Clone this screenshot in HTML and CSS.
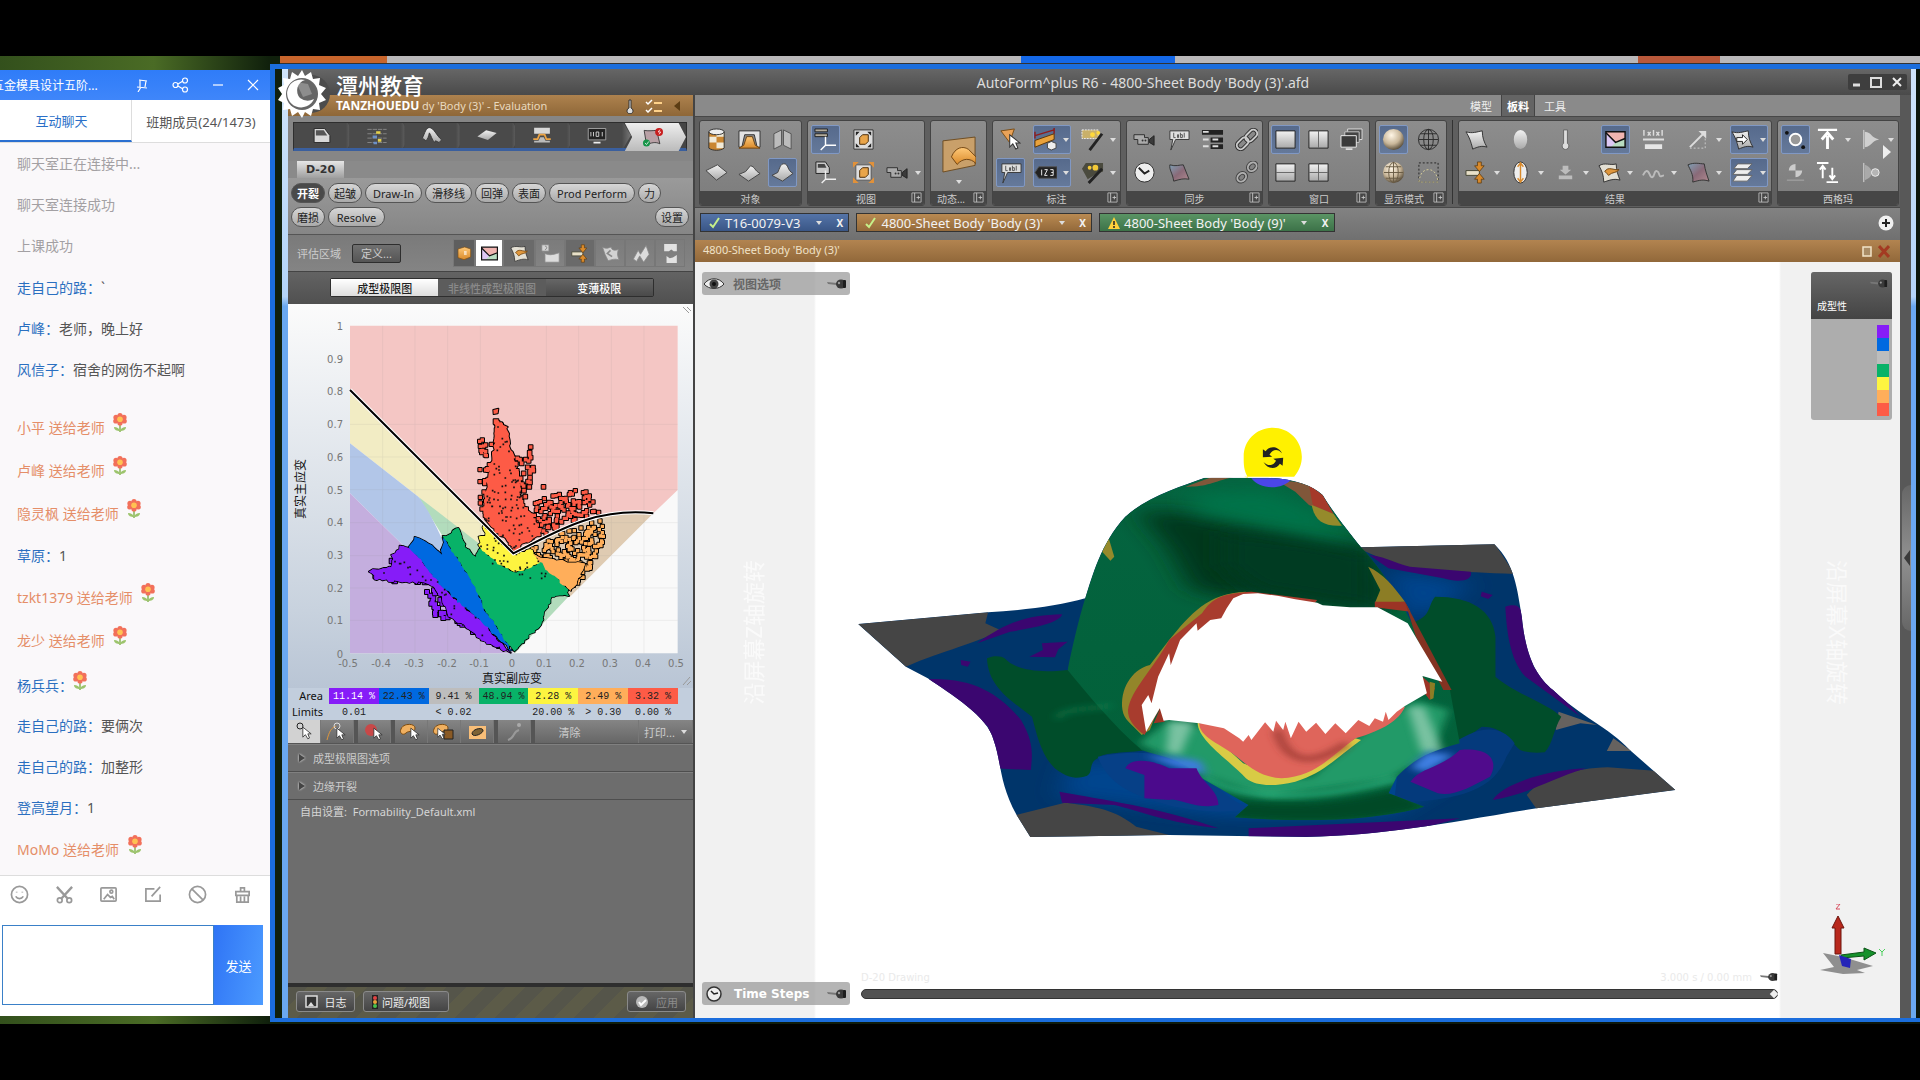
FILE: index.html
```html
<!DOCTYPE html>
<html lang="zh-CN">
<head>
<meta charset="utf-8">
<title>AutoForm^plus R6</title>
<link rel="stylesheet" href="styles.css">
</head>
<body>
<svg class="defs" aria-hidden="true">
  <defs>
    <linearGradient id="metal" x1="0" y1="0" x2="0" y2="1"><stop offset="0" stop-color="#f2f2f2"/><stop offset="1" stop-color="#a9a9a9"/></linearGradient>
    <linearGradient id="amber" x1="0" y1="0" x2="0" y2="1"><stop offset="0" stop-color="#ffc978"/><stop offset="1" stop-color="#d98a2b"/></linearGradient>
    <linearGradient id="rainbow" x1="0" y1="0" x2="1" y2="1"><stop offset="0" stop-color="#7f9fb4"/><stop offset="0.5" stop-color="#8a6a78"/><stop offset="1" stop-color="#b08a90"/></linearGradient>
    <radialGradient id="ball" cx="0.4" cy="0.3" r="0.7"><stop offset="0" stop-color="#fff6e6"/><stop offset="0.6" stop-color="#c9b79a"/><stop offset="1" stop-color="#5e523f"/></radialGradient>
  </defs>
  <symbol id="flower" viewBox="0 0 14 20"><path d="M7 10v9" stroke="#8fb85e" stroke-width="1.6"/><path d="M7 18C4 18 1 17 1 14c3 0 5 1 6 4zM7 18c3 0 6-1 6-4-3 0-5 1-6 4z" fill="#9cc46c"/><g fill="#f2705a"><circle cx="7" cy="2.6" r="2.6"/><circle cx="3" cy="4.4" r="2.6"/><circle cx="11" cy="4.4" r="2.6"/><circle cx="2.8" cy="8" r="2.6"/><circle cx="11.200" cy="8" r="2.6"/><circle cx="7" cy="10" r="2.6"/></g><circle cx="7" cy="6.300" r="2.800" fill="#ffc252"/></symbol>
  <symbol id="pin" viewBox="0 0 20 10"><path d="M0 3l10 1v2L1 5z" fill="#777"/><ellipse cx="14" cy="5" rx="5" ry="4.500" fill="#3a3a3a"/><rect x="16" y="1" width="3" height="8" rx="1" fill="#1e1e1e"/><circle cx="12" cy="4" r="1.200" fill="#999"/></symbol>
  <symbol id="dock" viewBox="0 0 12 12"><path d="M1 1h10v10H1z" fill="none" stroke="#b5b5b5"/><path d="M4 1v10M6 6h4M8 4v4" stroke="#c5c5c5"/></symbol>
  <symbol id="curved" viewBox="0 0 24 24"><path d="M1 4c7 2 11 0 17-1 0 7 2 12 5 17-6-2-10 0-15 2C6 13 4 9 1 4z" fill="url(#metal)" stroke="#333"/></symbol>
  <symbol id="camera" viewBox="0 0 24 24"><path d="M1 7h11v3h4v7H5v-5H1z" fill="#aaa" stroke="#2e2e2e"/><path d="M17 12l5-4v10l-5-3z" fill="#3a3a3a" stroke="#222"/><circle cx="10" cy="13" r="1" fill="#333"/><circle cx="13" cy="13" r="1" fill="#333"/></symbol>
  <symbol id="limitplot" viewBox="0 0 24 24"><path d="M2 4h20v16H2z" fill="#ddc8f4"/><path d="M2 4h20v8l-10 3z" fill="#f0b4b0"/><path d="M12 15l10-4v9H7z" fill="#b8dcc0"/><path d="M2 5l10 10 10-4" fill="none" stroke="#111" stroke-width="1.500"/><path d="M2 4h20v16H2z" fill="none" stroke="#111" stroke-width="1.500"/></symbol>
  <symbol id="thickness" viewBox="0 0 24 24"><path d="M1 10h14v5H1z" fill="#e8e0c8" stroke="#443"/><path d="M13 1h4v4h3l-5 6-5-6h3zM13 23h4v-4h3l-5-6-5 6h3z" fill="#d98a2b" stroke="#5c3a10" stroke-width="0.800"/></symbol>
  <symbol id="wave" viewBox="0 0 24 24"><path d="M1 5c6-4 12 0 18-2 0 7 2 12 4 17-6-2-11 0-17 2C6 15 4 10 1 5z" fill="#e4e0d4" stroke="#333"/><path d="M7 11c4-6 9-1 15-2-3 4-7 2-11 6-2-2-2-3-4-4z" fill="#e0973c" stroke="#6e4311"/></symbol>
  <symbol id="label" viewBox="0 0 24 24"><path d="M3 3h20v9H9L4 23l2-11H3z" fill="#dedede" stroke="#3a3a3a"/><path d="M7 5v5h2M11 7h1v3h-1zM14 5v5h2V7h-2M18 5v5" fill="none" stroke="#555"/></symbol>
  <symbol id="cursor" viewBox="0 0 12 16"><path d="M1 1v12l3-3 3 5 2-1-2-5h4z" fill="#fff" stroke="#333"/></symbol>
</svg>

<div class="screen">
 <div class="desktop">
  <aside class="chat">
    <header class="chat-head">
      <span class="chat-title">五金模具设计五阶...</span>
      <button aria-label="置顶"><svg width="14" height="14" viewBox="0 0 14 14"><path d="M4 2l8 1M5 2v7M11 3l-1 6M2 9l10 1M6 9l-3 5" class="ln"/></svg></button>
      <button aria-label="分享"><svg width="17" height="16" viewBox="0 0 17 16"><path d="M6 7l5-3M6 9l5 3" class="ln"/><circle cx="3.500" cy="8" r="2.500" class="ln"/><circle cx="13" cy="3.500" r="2.500" class="ln"/><circle cx="13" cy="12.500" r="2.500" class="ln"/></svg></button>
      <button aria-label="最小化"><svg width="12" height="12" viewBox="0 0 12 12"><path d="M1 6h10" class="ln"/></svg></button>
      <button aria-label="关闭"><svg width="12" height="12" viewBox="0 0 12 12"><path d="M1 1l10 10M11 1L1 11" class="ln"/></svg></button>
    </header>
    <nav class="chat-tabs"><button class="on">互动聊天</button><button>班期成员(24/1473)</button></nav>
    <ul class="messages">
      <li class="sys">聊天室正在连接中...</li>
      <li class="sys">聊天室连接成功</li>
      <li class="sys">上课成功</li>
      <li><b>走自己的路<i>：</i></b>`</li>
      <li><b>卢峰<i>：</i></b>老师，晚上好</li>
      <li><b>风信子<i>：</i></b>宿舍的网伤不起啊</li>
      <li class="gift first">小平 送给老师 <svg><use href="#flower"/></svg></li>
      <li class="gift">卢峰 送给老师 <svg><use href="#flower"/></svg></li>
      <li class="gift">隐灵枫 送给老师 <svg><use href="#flower"/></svg></li>
      <li><b>草原<i>：</i></b>1</li>
      <li class="gift">tzkt1379 送给老师 <svg><use href="#flower"/></svg></li>
      <li class="gift">龙少 送给老师 <svg><use href="#flower"/></svg></li>
      <li class="flow"><b>杨兵兵<i>：</i></b><svg><use href="#flower"/></svg></li>
      <li><b>走自己的路<i>：</i></b>要俩次</li>
      <li><b>走自己的路<i>：</i></b>加整形</li>
      <li><b>登高望月<i>：</i></b>1</li>
      <li class="gift">MoMo 送给老师 <svg><use href="#flower"/></svg></li>
    </ul>
    <div class="chat-tools">
      <button aria-label="表情"><svg viewBox="0 0 20 20"><circle cx="10" cy="10" r="8.500"/><path d="M6 12c2 3 6 3 8 0M7 7v1M13 7v1"/></svg></button>
      <button aria-label="截图"><svg viewBox="0 0 20 20"><path d="M2 2l11 12M18 2L7 14" stroke-width="2.500"/><circle cx="5" cy="16" r="2.500"/><circle cx="15" cy="16" r="2.500"/></svg></button>
      <button aria-label="图片"><svg viewBox="0 0 20 20"><rect x="2" y="3" width="16" height="14" rx="1"/><path d="M5 15l4-5 3 3 2-1 2 3"/><circle cx="13" cy="7" r="1.500"/></svg></button>
      <button aria-label="编辑"><svg viewBox="0 0 20 20"><path d="M11 4H2v13h15v-7M8 12l9-10"/></svg></button>
      <button aria-label="禁言"><svg viewBox="0 0 20 20"><circle cx="10" cy="10" r="8.500"/><path d="M4 4l12 12"/></svg></button>
      <button aria-label="清屏"><svg viewBox="0 0 20 20"><path d="M3 7h14v4H3zM4 11v7h12v-7M8 12v6M12 12v6M8 7V3h4v4"/></svg></button>
    </div>
    <form class="compose"><textarea aria-label="消息"></textarea><button type="button">发送</button></form>
  </aside>

  <div class="stage">
   <div class="behind"><i class="o1"></i><i class="b1"></i><i class="o2"></i></div>
   <div class="share">
    <div class="aero">
    <main class="app">
      <header class="titlebar">
        <h1>AutoForm^plus R6 - 4800-Sheet Body 'Body (3)'.afd</h1>
        <div class="winbtns"><button aria-label="最小化"><svg width="9" height="12" viewBox="0 0 9 12"><path d="M1 9h7" stroke="#ddd" stroke-width="3"/></svg></button><button aria-label="最大化"><svg width="12" height="12" viewBox="0 0 12 12"><path d="M1 2h10v9H1z" fill="none" stroke="#ddd" stroke-width="2"/></svg></button><button aria-label="关闭"><svg width="12" height="12" viewBox="0 0 12 12"><path d="M2 2l8 8M10 2l-8 8" stroke="#eee" stroke-width="2"/></svg></button></div>
        <div class="watermark">
          <svg width="54" height="50" viewBox="0 0 54 50"><circle cx="34" cy="25" r="19" fill="#4c4c4c"/><path d="M25 1l3 6 6-4 2 7 7-1-1 7 7 3-5 6 5 6-7 3 1 7-7-1-2 7-6-4-3 6-4-6-6 4-2-7-7 1 1-7-6-3 4-6-4-6 6-3-1-7 7 1 2-7 6 4z" fill="#fff"/><circle cx="25" cy="25" r="16" fill="#666"/><path d="M19 13l12 2 4 10-9 3z" fill="#8d8d8d"/><path d="M28 11a14 14 0 1 0 9 19 13 13 0 0 1-14-1 11 11 0 0 1 5-18z" fill="#fff"/></svg>
          <div><strong>潭州教育</strong><em>TANZHOUEDU</em></div>
        </div>
      </header>
      <div class="cols">
      <section class="panel">
        <div class="panel-title"><span>dy 'Body (3)' - Evaluation</span>
          <button aria-label="温度"><svg width="10" height="16" viewBox="0 0 10 16"><path d="M4 2h2v8a3 3 0 1 1-2 0z" fill="#ddd" stroke="#333"/></svg></button>
          <button aria-label="清单"><svg width="18" height="14" viewBox="0 0 18 14"><path d="M1 3l2 2 4-4M1 11l2 2 4-4" fill="none" stroke="#fff" stroke-width="1.500"/><path d="M9 4h8M9 12h8" stroke="#ffd28a" stroke-width="2"/></svg></button>
          <button aria-label="收起"><svg width="8" height="12" viewBox="0 0 8 12"><path d="M7 1v10L1 6z" fill="#5c3d14"/></svg></button></div>
        <div class="steps">
          <button aria-label="零件"><svg viewBox="0 0 24 24"><path d="M3 4h12l6 8v8H3z" fill="#d8d8d8" stroke="#222"/><path d="M5 6h9l4 6H5z" fill="#555"/></svg></button>
          <button aria-label="计划"><svg viewBox="0 0 24 24"><path d="M1 5h22M1 10h22M1 15h22M1 20h22" stroke="#8c8c8c" stroke-dasharray="5 1"/><path d="M11 7h5v3h-5zM13 16h4v3h-4z" fill="#e6d24a"/><path d="M7 12h5v3H7zM8 19h4v3H8z" fill="#6b90c8"/></svg></button>
          <button aria-label="曲面"><svg viewBox="0 0 24 24"><path d="M1 15C4 9 5 3 9 3c5 0 8 9 14 14l-3 3-4-2-1 2c-3-3-4-8-6-11-1 4-2 8-4 9z" fill="url(#metal)" stroke="#333"/></svg></button>
          <button aria-label="板料"><svg viewBox="0 0 24 24"><path d="M1 13l10-7 12 3-10 8z" fill="url(#metal)"/></svg></button>
          <button aria-label="工具"><svg viewBox="0 0 24 24"><path d="M3 3h18v7H3z" fill="#d8d8d8"/><path d="M2 16h5l2-5h6l2 5h5" fill="none" stroke="#eda444" stroke-width="2"/><path d="M3 18h5l2-4h4l2 4h5v2H3z" fill="#bbb"/></svg></button>
          <button aria-label="计算"><svg viewBox="0 0 24 24"><path d="M2 4h20v13H2z" fill="#222" stroke="#aaa"/><path d="M5 8v5M8 8v5M11 8h3v5h-3zM18 8v5" fill="none" stroke="#ddd"/><path d="M8 20h8" stroke="#eee" stroke-width="2"/></svg></button>
          <button class="cur" aria-label="评估"><svg viewBox="0 0 28 24"><path d="M4 3c7 1 11 0 16 0l4 17c-6-3-11-1-17 1z" fill="#b9a1a6" stroke="#222"/><circle cx="23" cy="5" r="5" fill="#c81e1e"/><path d="M24 2l-2 3h3l-2 3" stroke="#fff" fill="none"/><circle cx="7" cy="19" r="4.500" fill="#159447"/><path d="M5 19l2 2 3-4" fill="none" stroke="#fff"/></svg></button>
        </div>
        <div class="optabs"><button>D-20</button></div>
        <div class="pills">
          <button class="on">开裂</button><button>起皱</button><button class="w57">Draw-In</button><button class="w47">滑移线</button><button>回弹</button><button>表面</button><button class="w86">Prod Perform</button><button class="w23">力</button>
          <button>磨损</button><button class="w57">Resolve</button><button class="end">设置</button>
        </div>
        <div class="evalrow"><label for="area">评估区域</label><button id="area" class="define">定义...</button>
          <div class="evalicons">
            <button aria-label="箱" class="c1"><svg viewBox="0 0 24 24"><path d="M3 6l10-3 9 3v12l-10 4-9-3z" fill="url(#amber)" stroke="#7a4b12"/><path d="M12 9h4v6h-4z" fill="#fff" opacity=".6"/></svg></button>
            <button aria-label="极限图" class="c2"><svg viewBox="0 0 24 24"><use href="#limitplot"/></svg></button>
            <button aria-label="起皱" class="c3"><svg viewBox="0 0 24 24"><use href="#wave"/></svg></button>
            <button aria-label="曲线"><svg viewBox="0 0 24 24"><path d="M1 1h9v8H1z" fill="#d5d5d5" stroke="#888"/><path d="M2 10c7 5 12 4 21 1v12H5V12z" fill="#dcdcdc" stroke="#888"/><path d="M5 3c3-1 3 4 0 4" fill="none" stroke="#777"/></svg></button>
            <button aria-label="厚度" class="c5"><svg viewBox="0 0 24 24"><use href="#thickness"/></svg></button>
            <button aria-label="回弹"><svg viewBox="0 0 24 24"><path d="M2 4c6 3 8 0 11 0 0 3 3 5 9 3-2 5-1 9 1 13-6-2-9 0-14 1l-4-8z" fill="#d2d2d2" stroke="#888"/><path d="M12 8l-4 4 6 4" fill="none" stroke="#888" stroke-width="2"/></svg></button>
            <button aria-label="表面"><svg viewBox="0 0 24 24"><path d="M3 19L9 8l3 5 7-11 4 11-7 10-5-8-4 7z" fill="#dcdcdc" stroke="#888"/></svg></button>
            <button aria-label="更多"><svg viewBox="0 0 24 24"><path d="M4 0h16v9h-4l-3-2-3 2H4zM7 15l4 3 4-1 5-3v10H7z" fill="#e2e2e2"/></svg></button>
          </div></div>
        <div class="segwrap"><div class="seg"><button class="on">成型极限图</button><button class="off">非线性成型极限图</button><button>变薄极限</button></div></div>
        <div class="chart">
          <svg viewBox="0 0 405 384" role="img" aria-label="成型极限图">
            <g transform="scale(.33333) translate(-9 -12)">
              <path d="M195 77h983v983H195z" fill="#f9f9f9"/>
              <path d="M195 77h983v493l-73 70C920 620 800 705 685 760L195 270z" fill="#f4c6c4"/>
              <path d="M195 270l490 490v70L400 590 195 430z" fill="#f2ecc4"/>
              <path d="M400 590l285 220 80 70 90 5-165 175z" fill="#b2dcbc"/>
              <path d="M195 430l205 160c70 90 60 160 285 470L195 580z" fill="#b2c6e8"/>
              <path d="M195 580l490 480H195z" fill="#c4aede"/>
              <path d="M685 760c115-55 235-140 420-120L855 890 740 770z" fill="#dfcbb2"/>
              <path d="M293 77v983M390 77v983M488 77v983M586 77v983M784 77v983M881 77v983M979 77v983M1077 77v983M195 961h983M195 864h983M195 767h983M195 668h983M195 569h983M195 471h983M195 373h983" stroke="#888" stroke-width="2" opacity=".16"/>
              <g id="cloud"></g>
              <path d="M195 270l490 490c115-55 235-140 420-120" fill="none" stroke="#fff" stroke-width="12"/>
              <path d="M195 270l490 490c115-55 235-140 420-120" fill="none" stroke="#000" stroke-width="6"/>
            </g>
            <g class="ytick"><text x="55" y="26">1</text><text x="55" y="59">0.9</text><text x="55" y="91">0.8</text><text x="55" y="124">0.7</text><text x="55" y="157">0.6</text><text x="55" y="190">0.5</text><text x="55" y="222">0.4</text><text x="55" y="255">0.3</text><text x="55" y="288">0.2</text><text x="55" y="320">0.1</text><text x="55" y="354">0</text></g>
            <g class="xtick"><text x="60" y="363">-0.5</text><text x="93" y="363">-0.4</text><text x="126" y="363">-0.3</text><text x="159" y="363">-0.2</text><text x="191" y="363">-0.1</text><text x="224" y="363">0</text><text x="256" y="363">0.1</text><text x="289" y="363">0.2</text><text x="322" y="363">0.3</text><text x="355" y="363">0.4</text><text x="388" y="363">0.5</text></g>
            <text class="axis" x="224" y="379">真实副应变</text>
            <text class="axis" transform="translate(17 185) rotate(-90)">真实主应变</text>
            <path d="M395 3l6 6M399 3l4 4M395 381l7-8M399 381l4-4" stroke="#999"/>
          </svg>
        </div>
        <div class="areas"><table>
          <tr><th>Area</th><td class="k1">11.14 %</td><td class="k2">22.43 %</td><td class="k3">9.41 %</td><td class="k4">48.94 %</td><td class="k5">2.28 %</td><td class="k6">2.49 %</td><td class="k7">3.32 %</td></tr>
          <tr><th>Limits</th><td>0.01</td><td></td><td>&lt; 0.02</td><td></td><td>20.00 %</td><td>&gt; 0.30</td><td>0.00 %</td></tr>
        </table></div>
        <div class="picker">
          <button class="p1" aria-label="选点"><svg viewBox="0 0 24 20"><circle cx="8" cy="4" r="3" fill="none" stroke="#222"/><use href="#cursor" x="10" y="4" width="10" height="14"/></svg></button>
          <button aria-label="选线"><svg viewBox="0 0 24 20"><path d="M2 18C4 10 6 6 11 4" fill="none" stroke="#e0973c"/><circle cx="12" cy="4" r="3" fill="none" stroke="#ddd"/><use href="#cursor" x="11" y="5" width="10" height="14"/></svg></button>
          <button class="gap" aria-label="选圆"><svg viewBox="0 0 24 20"><circle cx="9" cy="8" r="6" fill="#c84848"/><use href="#cursor" x="11" y="5" width="10" height="14"/></svg></button>
          <button class="gap" aria-label="选区"><svg viewBox="0 0 24 20"><path d="M2 7c2-6 14-6 14-1s-6 2-9 5-7 0-5-4z" fill="#f0b060" stroke="#7a4b12"/><use href="#cursor" x="11" y="5" width="10" height="14"/></svg></button>
          <button aria-label="选体"><svg viewBox="0 0 24 20"><path d="M2 7c2-6 14-6 14-1s-6 2-9 5-7 0-5-4z" fill="#f0b060" stroke="#7a4b12"/><path d="M12 8h9v9h-9z" fill="#8a5a25" stroke="#222"/><use href="#cursor" x="5" y="5" width="9" height="13"/></svg></button>
          <button aria-label="孔"><svg viewBox="0 0 24 20"><path d="M4 4h17v13H4z" fill="#f8be78"/><path d="M7 12c0-5 10-7 11-4s-9 8-11 4z" fill="#7d6235" stroke="#222"/></svg></button>
          <button class="gap" aria-label="路径"><svg viewBox="0 0 24 20"><path d="M6 18c8-3 4-8 11-10" fill="none" stroke="#999" stroke-width="2"/><circle cx="17" cy="3" r="2" fill="#aaa"/></svg></button>
          <button class="gap clear">清除</button><button class="print">打印... <i class="caret"></i></button>
        </div>
        <details class="fold"><summary>成型极限图选项</summary></details>
        <details class="fold"><summary>边缘开裂</summary></details>
        <p class="free">自由设置:&nbsp; Formability_Default.xml</p>
        <footer class="panel-foot">
          <button><svg width="13" height="13" viewBox="0 0 13 13"><path d="M1 1h11v11H1z" fill="#333" stroke="#ddd" stroke-width="1.500"/><path d="M3 11l3-4 3 4z" fill="#ddd"/></svg>日志</button>
          <button class="wide"><svg width="6" height="14" viewBox="0 0 6 14"><path d="M0 0h6v14H0z" fill="#222"/><circle cx="3" cy="3" r="2" fill="#e04444"/><circle cx="3" cy="7" r="2" fill="#e8a23a"/><circle cx="3" cy="11" r="2" fill="#48c04c"/></svg>问题/视图</button>
          <button class="apply" disabled><svg width="14" height="14" viewBox="0 0 14 14"><circle cx="7" cy="7" r="6" fill="#b8b8b8"/><path d="M4 7l2 3 5-5" fill="none" stroke="#fff" stroke-width="2"/></svg>应用</button>
        </footer>
      </section>

      <section class="work">
        <nav class="menu"><button>模型</button><button class="on">板料</button><button>工具</button></nav>
        <div class="ribbon">
          <div class="grp g1"><div class="tools">
            <button aria-label="桶"><svg viewBox="0 0 24 24"><path d="M4 4h16v17c-4 3-12 3-16 0z" fill="#c98632"/><path d="M4 9h8v6H4zM12 4h8v5h-8zM12 15h8v6h-8z" fill="#f1ead8"/><ellipse cx="12" cy="4" rx="8" ry="3" fill="#eee" stroke="#333"/><path d="M4 4v17c4 3 12 3 16 0V4" fill="none" stroke="#333"/></svg></button>
            <button aria-label="模具"><svg viewBox="0 0 24 24"><path d="M1 3h22v17h-3L17 7H7L4 20H1z" fill="#e2e2e2" stroke="#333"/><path d="M1 21l5-3 3-9h6l3 9 5 3z" fill="url(#amber)" stroke="#6e4311"/></svg></button>
            <button aria-label="截面"><svg viewBox="0 0 24 24"><path d="M3 6l8-4v16l-8 4zM13 2l8 4v16l-8-4z" fill="#bcbcbc" stroke="#555"/></svg></button>
            <button aria-label="平板"><svg viewBox="0 0 24 24"><path d="M1 10l12-6 10 8-11 8z" fill="url(#metal)" stroke="#444"/></svg></button>
            <button aria-label="曲板"><svg viewBox="0 0 24 24"><path d="M1 14l7-3 5-6c5 1 4 5 10 8l-12 8z" fill="url(#metal)" stroke="#444"/></svg></button>
            <button class="sel" aria-label="成形"><svg viewBox="0 0 24 24"><path d="M1 15l6-3c2-4 3-10 7-9 4 0 3 7 9 10l-11 8z" fill="url(#metal)" stroke="#444"/></svg></button>
          </div><div class="cap">对象</div></div>

          <div class="grp g2"><div class="tools">
            <button class="sel" aria-label="坐标"><svg viewBox="0 0 24 24"><path d="M1 1h13v3H1zM1 6h13v3H1z" fill="#b5ad9c" stroke="#222"/><path d="M12 9v9h11M12 18l-5 5" fill="none" stroke="#fff" stroke-width="1.500"/></svg></button>
            <button aria-label="适合"><svg viewBox="0 0 24 24"><path d="M2 2h20v20H2z" fill="#ddd" stroke="#333"/><path d="M4 4h4L4 8zM20 4v4l-4-4zM4 20v-4l4 4zM20 20h-4l4-4z" fill="#222"/><path d="M8 10l3-3h6v7l-3 3H8z" fill="#e9a54a" stroke="#4a2c08"/></svg></button><span></span>
            <button aria-label="车身"><svg viewBox="0 0 24 24"><path d="M2 1h10l4 6v6H2z" fill="#c8c8c8" stroke="#222"/><path d="M4 3h7l2 4H4z" fill="#444"/><path d="M12 10v9h11M12 19l-4 4" fill="none" stroke="#eee" stroke-width="1.500"/></svg></button>
            <button aria-label="框选"><svg viewBox="0 0 24 24"><path d="M4 4h16v16H4z" fill="#ddd" stroke="#555"/><path d="M1 1h6L1 7zM23 1v6l-6-6zM1 23v-6l6 6zM23 23h-6l6-6z" fill="#e0913a"/><path d="M8 10l3-3h6v7l-3 3H8z" fill="#e9a54a" stroke="#4a2c08"/></svg></button>
            <button class="dd" aria-label="录像"><svg viewBox="0 0 24 24"><use href="#camera"/></svg><i class="caret"></i></button>
          </div><div class="cap">视图<svg><use href="#dock"/></svg></div></div>

          <div class="grp g3"><div class="tools"><button class="big" aria-label="动态截面"><svg width="36" height="40" viewBox="0 0 36 40"><path d="M1 5l34-4v30L1 38z" fill="#c9a06a" stroke="#6b4a20"/><path d="M10 22c4-10 12-12 18-8l8 8v7c-6-6-14-6-20 1z" fill="url(#amber)" stroke="#6e4311"/></svg><i class="caret"></i></button></div><div class="cap">动态...<svg><use href="#dock"/></svg></div></div>

          <div class="grp g4"><div class="tools">
            <button aria-label="选择"><svg viewBox="0 0 24 24"><path d="M2 3l14-2-5 14z" fill="#e9a258" stroke="#7a4b12"/><use href="#cursor" x="10" y="6" width="13" height="17"/></svg></button>
            <button class="dd sel" aria-label="测量"><svg viewBox="0 0 24 24"><path d="M1 13l20-7v6L1 20z" fill="#e9a23c" stroke="#5a3508"/><path d="M1 8l20-6M1 4v7M21 0v6" stroke="#8e1c1c" stroke-width="1.500"/><path d="M14 16l4-2 5 2v5l-5 2-4-2z" fill="#eee" stroke="#444"/></svg><i class="caret"></i></button>
            <button class="dd" aria-label="魔棒"><svg viewBox="0 0 24 24"><path d="M1 2h17v9H1z" fill="#c9b06a" stroke="#eee" stroke-dasharray="2 1"/><path d="M9 23L22 6" stroke="#222" stroke-width="3"/><circle cx="12" cy="7" r="2.500" fill="#ffd93a"/><circle cx="18" cy="5" r="2" fill="#ffd93a"/></svg><i class="caret"></i></button>
            <button class="sel" aria-label="标签"><svg viewBox="0 0 24 24"><use href="#label"/></svg></button>
            <button class="dd sel" aria-label="数值"><svg viewBox="0 0 24 24"><path d="M1 12l4-6h19v12H5z" fill="#222" stroke="#555"/><path d="M8 9v6M11 9h3l-3 6h3M17 9h3v6h-3M18 12h2" fill="none" stroke="#eee"/></svg><i class="caret"></i></button>
            <button class="dd" aria-label="魔棒标注"><svg viewBox="0 0 24 24"><path d="M1 8l4-6h18v9l-8 3-8 5z" fill="#4a4a3e"/><path d="M8 23L22 8" stroke="#222" stroke-width="3"/><circle cx="9" cy="7" r="2" fill="#f2c838"/><circle cx="15" cy="7" r="3" fill="#f2c838"/></svg><i class="caret"></i></button>
          </div><div class="cap">标注<svg><use href="#dock"/></svg></div></div>

          <div class="grp g5"><div class="tools">
            <button aria-label="同步录像"><svg viewBox="0 0 24 24"><use href="#camera"/></svg></button>
            <button aria-label="同步标签"><svg viewBox="0 0 24 24"><use href="#label"/></svg></button>
            <button aria-label="同步选项"><svg viewBox="0 0 24 24"><path d="M1 2h22v5H1zM10 10h13v5H10zM10 17h13v5H10z" fill="#222"/><path d="M2 4h6M2 12h6M2 19h6M12 12h6M12 19h6" stroke="#ddd" stroke-width="2"/></svg></button>
            <button aria-label="链接"><svg viewBox="0 0 24 24"><g fill="none" stroke="#333" stroke-width="4"><rect x="10" y="4" width="14" height="8" rx="4" transform="rotate(-45 17 8)"/><rect x="1" y="12" width="14" height="8" rx="4" transform="rotate(-45 8 16)"/></g><g fill="none" stroke="#ccc" stroke-width="2"><rect x="10" y="4" width="14" height="8" rx="4" transform="rotate(-45 17 8)"/><rect x="1" y="12" width="14" height="8" rx="4" transform="rotate(-45 8 16)"/></g></svg></button>
            <button aria-label="时间"><svg viewBox="0 0 24 24"><circle cx="12" cy="12" r="10" fill="#eee" stroke="#333"/><path d="M6 7l6 6 5-3" fill="none" stroke="#222" stroke-width="2"/></svg></button>
            <button aria-label="颜色"><svg viewBox="0 0 24 24"><path d="M3 4c6 2 10 0 14 0l6 15c-6-1-9 0-16 2C6 13 2 9 3 4z" fill="url(#rainbow)" stroke="#333"/></svg></button><span></span>
            <button aria-label="断开"><svg viewBox="0 0 24 24"><g fill="none" stroke="#444" stroke-width="4"><ellipse cx="18" cy="6" rx="5" ry="4" transform="rotate(-45 18 6)"/><ellipse cx="7" cy="17" rx="5" ry="4" transform="rotate(-45 7 17)"/></g><g fill="none" stroke="#b0b0b0" stroke-width="2"><ellipse cx="18" cy="6" rx="5" ry="4" transform="rotate(-45 18 6)"/><ellipse cx="7" cy="17" rx="5" ry="4" transform="rotate(-45 7 17)"/></g></svg></button>
          </div><div class="cap">同步<svg><use href="#dock"/></svg></div></div>

          <div class="grp g6"><div class="tools">
            <button class="sel" aria-label="单窗口"><svg viewBox="0 0 24 24"><path d="M2 3h20v18H2z" fill="url(#metal)" stroke="#222"/></svg></button>
            <button aria-label="左右"><svg viewBox="0 0 24 24"><path d="M2 3h20v18H2z" fill="url(#metal)" stroke="#222"/><path d="M12 3v18" stroke="#666"/></svg></button>
            <button aria-label="多显示器"><svg viewBox="0 0 24 24"><path d="M8 1h15v11H8z" fill="#555" stroke="#ddd"/><path d="M5 4h15v11H5z" fill="#444" stroke="#ccc"/><path d="M1 8h16v12H1z" fill="#3a3a3a" stroke="#eee"/><path d="M6 22h7" stroke="#ddd" stroke-width="2"/></svg></button>
            <button aria-label="上下"><svg viewBox="0 0 24 24"><path d="M2 3h20v18H2z" fill="url(#metal)" stroke="#222"/><path d="M2 12h20" stroke="#666"/></svg></button>
            <button aria-label="四分"><svg viewBox="0 0 24 24"><path d="M2 3h20v18H2z" fill="url(#metal)" stroke="#222"/><path d="M2 12h20M12 3v18" stroke="#666"/></svg></button>
          </div><div class="cap">窗口<svg><use href="#dock"/></svg></div></div>

          <div class="grp g7"><div class="tools">
            <button class="sel" aria-label="实体"><svg viewBox="0 0 24 24"><circle cx="12" cy="12" r="11" fill="url(#ball)"/></svg></button>
            <button aria-label="线框"><svg viewBox="0 0 24 24"><g fill="none" stroke="#2c2c2c"><circle cx="12" cy="12" r="10.500"/><ellipse cx="12" cy="12" rx="5" ry="10.500"/><path d="M12 1v22M2 12h20M4 6h16M4 18h16"/></g></svg></button>
            <button aria-label="实体网格"><svg viewBox="0 0 24 24"><circle cx="12" cy="12" r="11" fill="url(#ball)"/><g fill="none" stroke="#6a5c45"><ellipse cx="12" cy="12" rx="5" ry="10.500"/><path d="M12 1v22M2 12h20M4 6h16M4 18h16"/></g></svg></button>
            <button aria-label="轮廓"><svg viewBox="0 0 24 24"><path d="M2 2h20v20H2z" fill="none" stroke="#222" stroke-dasharray="2 2"/><path d="M2 22c1-8 4-13 10-13s9 5 10 13z" fill="none" stroke="#d8cf9a" stroke-dasharray="2 2"/></svg></button>
          </div><div class="cap">显示模式<svg><use href="#dock"/></svg></div></div>
          <i class="rsep"></i>

          <div class="grp g8"><div class="tools">
            <button class="dd" aria-label="曲面"><svg viewBox="0 0 24 24"><use href="#curved"/></svg><i></i></button>
            <button class="dd" aria-label="椭圆"><svg viewBox="0 0 24 24"><ellipse cx="12" cy="12" rx="7" ry="10" fill="url(#metal)"/></svg><i></i></button>
            <button class="dd" aria-label="温度"><svg viewBox="0 0 24 24"><path d="M10 2h4v14a3.500 3.500 0 1 1-4 0z" fill="#ddd" stroke="#666"/></svg><i></i></button>
            <button class="sel" aria-label="成型性"><svg viewBox="0 0 24 24"><use href="#limitplot"/></svg></button>
            <button class="dd" aria-label="公式"><svg viewBox="0 0 24 24"><path d="M2 2v6M6 4l3 4M9 4L6 8M12 2v6M15 4l3 4M18 4l-3 4M21 2v6" stroke="#ddd" stroke-width="1.500"/><path d="M1 12h22" stroke="#ddd" stroke-width="2"/><path d="M3 17h18v5H3z" fill="#e6e6e6"/></svg><i></i></button>
            <button class="dd" aria-label="方向"><svg viewBox="0 0 24 24"><path d="M3 20L17 6" stroke="#ddd" stroke-width="2"/><path d="M12 3h8v8z" fill="#ddd"/><path d="M3 21h16V9" fill="none" stroke="#ccc" stroke-dasharray="2 2"/></svg><i class="caret"></i></button>
            <button class="dd sel" aria-label="流向"><svg viewBox="0 0 24 24"><use href="#curved"/><path d="M6 10h6V7l5 5-5 5v-3H6z" fill="#fff" stroke="#222"/></svg><i class="caret"></i></button>
            <button class="dd" aria-label="减薄"><svg viewBox="0 0 24 24"><use href="#thickness"/></svg><i class="caret"></i></button>
            <button class="dd" aria-label="应变"><svg viewBox="0 0 24 24"><ellipse cx="12" cy="12" rx="7" ry="11" fill="#eee" stroke="#333"/><path d="M12 3v18M9 6l3-4 3 4M9 18l3 4 3-4" fill="none" stroke="#d98a2b" stroke-width="1.500"/></svg><i class="caret"></i></button>
            <button class="dd" aria-label="压力"><svg viewBox="0 0 24 24"><path d="M9 5h6v4h3l-6 5-6-5h3zM5 15h14v4H5z" fill="#bdbdbd"/></svg><i class="caret"></i></button>
            <button class="dd" aria-label="起皱"><svg viewBox="0 0 24 24"><use href="#wave"/></svg><i class="caret"></i></button>
            <button class="dd" aria-label="回弹"><svg viewBox="0 0 24 24"><path d="M1 15c3-6 5-6 7-1s4 3 5-1 4-3 5 1 3 1 5 1" fill="none" stroke="#bbb" stroke-width="2"/></svg><i class="caret"></i></button>
            <button class="dd" aria-label="云图"><svg viewBox="0 0 24 24"><path d="M1 4c7-3 12-1 17-1 1 7 3 12 5 18-6-2-10-1-17 1C7 14 3 9 1 4z" fill="url(#rainbow)" stroke="#333"/></svg><i class="caret"></i></button>
            <button class="dd sel" aria-label="图层"><svg viewBox="0 0 24 24"><path d="M2 21l4-6h16l-5 6zM2 14l4-5h16l-5 5zM3 8l4-5h15l-5 5z" fill="#eee" stroke="#666"/></svg><i class="caret"></i></button>
          </div><div class="cap">结果<svg><use href="#dock"/></svg></div></div>

          <div class="grp g9"><div class="tools">
            <button class="sel" aria-label="散点"><svg viewBox="0 0 24 24"><circle cx="12" cy="12" r="6" fill="#999" stroke="#fff" stroke-width="2"/><circle cx="3" cy="5" r="2" fill="#111"/><circle cx="20" cy="20" r="2" fill="#111"/></svg></button>
            <button class="dd" aria-label="上限"><svg viewBox="0 0 24 24"><path d="M2 2h20" stroke="#fff" stroke-width="2.500"/><path d="M12 22V8M6 12l6-7 6 7" fill="none" stroke="#fff" stroke-width="3"/></svg><i class="caret"></i></button>
            <button class="dd" aria-label="分布"><svg viewBox="0 0 24 24"><path d="M5 2v20" stroke="#ddd"/><path d="M6 4c8 1 6 6 15 8-9 2-7 7-15 8z" fill="#d0d0d0"/></svg><i class="caret"></i></button>
            <button aria-label="靶"><svg viewBox="0 0 24 24"><path d="M12 3v14a7 7 0 0 0 7-7h-7zM12 3a7 7 0 0 0-7 7h7z" fill="#ccc"/><path d="M3 20h18" stroke="#aaa"/></svg></button>
            <button class="dd" aria-label="范围"><svg viewBox="0 0 24 24"><path d="M1 2h12M11 22h12" stroke="#fff" stroke-width="2"/><path d="M7 18V6M4 9l3-4 3 4M17 7v11M14 15l3 4 3-4" fill="none" stroke="#fff" stroke-width="2"/></svg><i></i></button>
            <button class="dd" aria-label="偏差"><svg viewBox="0 0 24 24"><path d="M5 2v20" stroke="#ddd"/><path d="M6 4c8 3 6 7 8 8-2 2 0 5-8 8z" fill="#aaa"/><circle cx="17" cy="12" r="4" fill="#b5b5b5" stroke="#eee"/></svg><i></i></button>
          </div><div class="cap">西格玛</div><button class="more" aria-label="更多"><svg width="8" height="14" viewBox="0 0 8 14"><path d="M0 0l8 7-8 7z" fill="#eee"/></svg></button></div>
        </div>

        <div class="docs">
          <div class="doc blue"><svg width="12" height="12" viewBox="0 0 12 12"><path d="M1 7l3 3 6-9" class="ok"/></svg><span>T16-0079-V3</span><button aria-label="菜单"><i class="caret"></i></button><button aria-label="关闭">X</button></div>
          <div class="doc brown"><svg width="12" height="12" viewBox="0 0 12 12"><path d="M1 7l3 3 6-9" class="ok"/></svg><span>4800-Sheet Body 'Body (3)'</span><button aria-label="菜单"><i class="caret"></i></button><button aria-label="关闭">X</button></div>
          <div class="doc green"><svg width="12" height="12" viewBox="0 0 12 12"><path d="M6 0l6 12H0z" fill="#ffd23c"/><path d="M6 4v4M6 9v2" stroke="#222" stroke-width="1.500"/></svg><span>4800-Sheet Body 'Body (9)'</span><button aria-label="菜单"><i class="caret"></i></button><button aria-label="关闭">X</button></div>
          <button class="add" aria-label="新增"><svg width="16" height="16" viewBox="0 0 16 16"><circle cx="8" cy="8" r="7.500" fill="#f0f0f0"/><path d="M8 4v8M4 8h8" stroke="#222" stroke-width="2"/></svg></button>
        </div>
        <div class="docbar"><span>4800-Sheet Body 'Body (3)'</span><svg width="10" height="12" viewBox="0 0 10 12"><path d="M1 2h8v9H1z" fill="#a98c66" stroke="#f2e3c8" stroke-width="1.500"/></svg><svg width="12" height="13" viewBox="0 0 12 13"><path d="M1 1l10 11M11 1L1 12" stroke="#a33a22" stroke-width="3"/></svg></div>

        <div class="viewport">
          <svg class="model" viewBox="0 0 1205 756" role="img" aria-label="板料成型性">
            <defs>
              <filter id="soft" x="-30%" y="-30%" width="160%" height="160%"><feGaussianBlur stdDeviation="9"/></filter>
              <filter id="softer" x="-40%" y="-40%" width="180%" height="180%"><feGaussianBlur stdDeviation="24"/></filter>
              <linearGradient id="cone" x1="0" y1="0" x2="0" y2="1"><stop offset="0" stop-color="#046440"/><stop offset="1" stop-color="#026038"/></linearGradient>
              <clipPath id="sheet"><path d="M33 642L270 607C340 600 400 587 447 565C460 500 475 400 520 320C560 260 620 230 665 203L780 203C830 208 860 225 880 255C900 310 930 370 950 412L1193 403C1230 460 1235 540 1243 620C1250 740 1270 800 1300 840C1350 920 1400 950 1440 1020L1523 1140L1270 1195C1100 1240 1000 1275 850 1281L600 1275L347 1281L322 1215C290 1120 295 1060 280 990C270 920 200 850 160 805L120 770z"/></clipPath>
              <clipPath id="conearea"><path d="M447 565C460 500 475 400 520 320C560 260 620 230 665 203L780 203C830 208 860 225 880 255C900 310 930 370 950 412C1000 500 1040 620 1055 690L1112 840L1130 1000C1060 1030 1040 1060 1015 1100L1000 1150L1065 1190C980 1230 850 1240 720 1222L745 1185L655 1100C620 1040 570 1035 550 1020C500 950 450 850 415 780C425 700 435 630 447 565z"/></clipPath>
            </defs>
            <g transform="matrix(.5485 0 0 .33333 145 148)">
              <g clip-path="url(#sheet)">
                <path d="M0 180h1568v1120H0z" fill="#00356a"/>
                <path d="M420 1060l-20 100 300 60h300l100-100 40-160zM1000 480l150 40-60 80-60 20z" fill="#00458e" filter="url(#softer)"/>
                <g fill="#454545">
                  <path d="M33 642L270 607L265 640L292 660C250 700 190 720 120 770z"/>
                  <path d="M940 412L1193 400L1230 492C1130 485 1050 480 1020 468L980 440z"/>
                  <path d="M1525 1140L1270 1197L1252 1155C1280 1100 1340 1075 1400 1072L1485 1082z"/>
                  <path d="M320 1215L410 1178C480 1190 510 1210 540 1250L600 1275L340 1285z"/>
                  <path d="M1310 905l70 40-30-5-45 20zM1410 985l-12 38h45z" fill="#66625f"/>
                </g>
                <g fill="#3b0670">
                  <path d="M155 808C240 800 290 850 330 930C355 1000 350 1040 348 1080L285 1075L270 950z"/>
                  <path d="M250 700C300 640 340 615 405 613C400 640 350 655 310 665z"/>
                  <path d="M368 700L415 695L398 718L392 742L345 740L370 720zM220 750l18 5-5 15-12-5z"/>
                  <path d="M965 435C1000 440 1020 470 1050 472L1150 485C1155 510 1130 520 1100 505L1000 475z"/>
                  <path d="M1213 590C1240 575 1245 600 1245 640L1265 770L1350 920L1250 800C1220 750 1215 650 1213 590z"/>
                  <path d="M1170 545l20 10-8 12-14-8z"/>
                  <path d="M400 1145C480 1170 580 1190 690 1255C600 1240 540 1200 500 1185L405 1178z"/>
                  <path d="M745 1255L1130 1225L1000 1280H745z"/>
                  <path d="M1190 1170C1210 1120 1290 1080 1360 1075C1290 1110 1260 1150 1190 1170z"/>
                </g>
                <g fill="#004d2a">
                  <path d="M268 745C280 735 295 738 300 745C320 780 360 790 415 780L560 1020C520 1030 480 1025 470 1045C450 1060 465 1095 445 1100C430 1105 420 1105 405 1090C370 1060 360 980 350 920C310 870 270 830 268 745z"/>
                  <path d="M1085 560C1150 560 1190 600 1195 680V800C1230 850 1290 880 1315 920C1300 960 1300 1000 1285 1027C1265 1030 1250 1027 1240 1020C1220 990 1210 950 1170 950L1120 1010L1030 780L1040 640C1080 620 1070 590 1085 560z"/>
                </g>
                <path d="M470 1040C540 1015 600 1035 655 1050C670 1110 700 1160 745 1195C700 1215 650 1200 610 1190C540 1160 490 1130 470 1040z" fill="#064087"/>
                <path d="M1015 1110C1020 1060 1060 1020 1110 1010C1150 960 1200 930 1230 1000L1215 1040C1190 1150 1120 1170 1010 1180z" fill="#043a7c"/>
                <g clip-path="url(#conearea)">
                <path d="M400 190h760v1050H400z" fill="url(#cone)"/>
                <path d="M540 300L640 310L960 415L1010 600L760 560L700 560L640 540L600 420z" fill="#00381f" filter="url(#softer)"/>
                <path d="M700 360L880 395L970 430V600L760 545L700 470z" fill="#003a20" filter="url(#softer)"/>
                <path d="M640 250L780 240L870 300L940 400L650 305z" fill="#067349" filter="url(#softer)"/>
                <path d="M545 1000L600 930L690 960L760 1110L860 1100L960 960L1050 870L1110 900L1080 1030L1000 1110L780 1160L670 1100z" fill="#219a68" filter="url(#soft)"/>
                <path d="M600 935h45l-25 100-25-10zM1035 890l30 0 35 140-40-5z" fill="#a0d4bb" opacity=".7" filter="url(#soft)"/>
                <path d="M660 1100C740 1175 860 1175 1020 1105" fill="none" stroke="#2aae7a" stroke-width="16" filter="url(#soft)"/>
                <path d="M680 1165C800 1195 900 1185 1010 1140L1065 1190C980 1235 850 1240 700 1222z" fill="#004a28" filter="url(#soft)"/>
                </g>
                <path d="M395 925C410 890 460 900 495 885" fill="none" stroke="#168050" stroke-width="8" filter="url(#soft)"/>
                <path d="M555 1035C610 1040 640 1045 658 1055L668 1095L610 1070z" fill="#3c7de0" filter="url(#soft)"/>
                <path d="M520 1075C530 1040 570 1050 600 1075H650C660 1120 690 1140 690 1185C650 1200 610 1160 600 1170L555 1165V1095z" fill="#4b0a8c"/>
                <path d="M1040 1075L1070 1025L1120 1035L1070 1085z" fill="#3f7fe2" filter="url(#soft)"/>
                <path d="M1040 1115C1060 1070 1090 1080 1130 1020C1190 1010 1200 1060 1185 1100C1150 1130 1120 1160 1090 1150z" fill="#500b8c"/>
                <path d="M630 230L680 200H720C680 215 670 230 635 230zM800 215C840 210 860 225 880 260L900 315L855 285L830 245z" fill="#80573a"/>
                <path d="M855 225L880 255L900 312L862 285z" fill="#a5392a"/>
                <path d="M860 285L900 312L915 347C880 350 865 330 860 285z" fill="#958a2b"/>
                <path d="M490 385L500 440L493 452L478 425z" fill="#958a2b"/>
                <path d="M963 470C990 490 1010 530 1030 575L975 580L985 540z" fill="#8c7d25"/>
                <path d="M975 575H1030L1040 605L975 592z" fill="#9c3425"/>
                <path d="M1030 575L1115 840H1100L1050 680z" fill="#843322"/>
                <path d="M750 205H825C815 225 800 232 788 232C770 232 758 222 750 205z" fill="#4b46e8"/>
                <path d="M515 900C510 840 530 780 565 765L600 690C640 610 670 550 740 545L720 610L640 680L590 850L565 960L550 975C530 940 518 930 515 900z" fill="#93862a"/>
                <path d="M525 900C530 840 570 780 600 690L660 610C680 560 700 550 750 545L870 570L860 590L760 570L650 670L600 850L555 975C535 950 525 930 525 900z" fill="#a83c2e"/>
                <path d="M572 940L585 890L592 935zM1062 800L1085 835L1075 870L1066 850z" fill="#9c3425"/>
                <path d="M1075 815l10 5-3 45-6 4z" fill="#8c7d25"/>
                <path d="M652 935L735 1060L800 1100L860 1060L940 985L950 990C900 1050 880 1090 830 1115C790 1130 760 1130 740 1105C710 1050 650 990 652 935z" fill="#d8cb45"/>
                <path d="M655 940L1030 890C1020 930 990 960 940 985C900 1030 870 1100 805 1105C760 1100 740 1060 715 1030C690 1000 655 980 655 940z" fill="#df655b"/>
                <path d="M797 960C805 1010 820 1042 850 1047C880 1045 900 1025 925 1000" fill="none" stroke="#9a3830" stroke-width="14" filter="url(#soft)"/>
              </g>
              <path d="M717 565L735 552L762 550L800 558L830 568L870 578L880 586L930 592L980 592L1035 640L1060 710L1098 815L1062 798L1070 850L1030 888L1015 905L1000 930L995 905L990 935L975 925L965 948L945 930L922 970L903 940L885 972L868 938L850 965L836 935L822 985L812 935L808 960L795 932L790 965L775 937L750 990L745 975L735 995L728 985L700 955L655 940L600 930L590 932L583 895L558 965L550 885L562 855L568 880L580 800L600 730L603 765L620 690L650 640L652 662L675 630L695 625L705 595z" fill="#fff"/>
              <path d="M737 200H828C838 180 842 160 842 140C842 90 818 53 789 53S736 90 736 140C736 165 736 180 744 203z" fill="#fff100"/>
              <path d="M771 118L776 124C782 108 798 106 806 130C798 114 788 118 783 134L788 140L771 142zM807 167L802 161C796 178 780 180 772 156C780 170 790 168 795 152L790 146L808 143z" fill="#222"/>
            </g>
          </svg>
          <p class="spin left">沿屏幕Z轴旋转</p>
          <p class="spin right">沿屏幕X轴旋转</p>
          <button class="chip top"><svg width="20" height="12" viewBox="0 0 20 12"><path d="M0 6c5-7 15-7 20 0-5 6-15 6-20 0z" fill="#eee" stroke="#333"/><circle cx="10" cy="6" r="4.500" fill="#444"/><circle cx="10" cy="6" r="2" fill="#111"/></svg><span>视图选项</span><svg width="20" height="10"><use href="#pin"/></svg></button>
          <div class="legend"><h2><svg width="18" height="9"><use href="#pin"/></svg>成型性</h2><ul><li class="k1"></li><li class="k2"></li><li class="k3"></li><li class="k4"></li><li class="k5"></li><li class="k6"></li><li class="k7"></li></ul></div>
          <svg class="axes" width="72" height="74" viewBox="0 0 72 74"><path d="M3 66l14-3-11-14 20 4 30 9-16 4 8 3-22 1z" fill="#8f8f8f"/><path d="M19 0h4l-4 5h4" fill="none" stroke="#d84a5c"/><path d="M18 50V24h-3l6-12 6 12h-3v26z" fill="#b8281c" stroke="#6c140c"/><path d="M24 51l23-3v-4l12 5-12 7v-4l-22 2z" fill="#15912b" stroke="#0b5417"/><path d="M22 51l12 4-1 9-8-2z" fill="#2424b8"/><path d="M62 45l3 3 3-3M65 48v4" fill="none" stroke="#4bcf5c"/></svg>
          <div class="timebar">
            <button class="chip steps-chip"><svg width="16" height="16" viewBox="0 0 16 16"><circle cx="8" cy="8" r="7" fill="#eee" stroke="#333" stroke-width="1.500"/><path d="M5 5l3 3 4-1" fill="none" stroke="#222" stroke-width="1.500"/></svg><span>Time Steps</span><svg width="20" height="10"><use href="#pin"/></svg></button>
            <div class="track"><div class="ghost"><span>D-20 Drawing</span><span>3.000 s / 0.00 mm</span><svg width="18" height="10"><use href="#pin"/></svg></div>
            <input type="range" min="0" max="100" value="100" aria-label="Time Steps"></div>
          </div>
        </div>
      </section>
      <div class="gutter"><button aria-label="展开"><svg width="8" height="18" viewBox="0 0 8 18"><path d="M7 1v16L1 9z" fill="#3a3a3a"/></svg></button></div>
      </div>
    </main>
    </div>
   </div>
  </div>
 </div>
</div>
<script src="chart.js"></script>
</body>
</html>
```
FILE: styles.css
```css
* { box-sizing: border-box; }
body { margin: 0; background: #000; font-family: "Noto Sans", "Noto Sans CJK SC", sans-serif; font-size: 12px; color: #ddd; }
button { font: inherit; color: inherit; border: 0; padding: 0; margin: 0; background: none; display: flex; align-items: center; justify-content: center; flex: none; }
h1, h2, p, ul { margin: 0; padding: 0; font-weight: normal; list-style: none; }
svg { flex: none; display: block; }
.defs { position: absolute; width: 0; height: 0; }
.screen { min-height: 100vh; display: flex; flex-direction: column; padding: 56px 0; }
.desktop { flex: 1; display: flex; background: linear-gradient(90deg, #33501c, #4a6b25 8%, #10200c 14%, #0c160c); }

/* chat */
.chat { width: 270px; flex: none; margin: 14px 0 8px; background: #faf8fa; color: #555; font-size: 14px; display: flex; flex-direction: column; }
.chat-head { height: 30px; background: linear-gradient(#2f7cf8, #3f86fa); display: flex; align-items: center; gap: 23px; color: #fff; font-size: 12px; padding-right: 11px; overflow: hidden; }
.chat-title { flex: 1; margin-left: -8px; white-space: nowrap; }
.ln { fill: none; stroke: #fff; stroke-width: 1.2; }
.chat-tabs { display: flex; height: 43px; background: #fff; border-bottom: 1px solid #ddd; font-size: 13px; }
.chat-tabs button { flex: 1; }
.chat-tabs .on { flex: 0 0 132px; padding-right: 8px; color: #2a6fc8; border-right: 1px solid #ddd; border-bottom: 2px solid #2a6fd0; }
.messages { flex: 1; padding: 1px 17px 0; }
.messages li { height: 41px; line-height: 40px; white-space: nowrap; }
.messages b { font-weight: normal; color: #2a6fc0; }
.messages i { font-style: normal; font-family: "Noto Sans CJK TC", sans-serif; }
.messages .sys { color: #a3a0a3; }
.messages .gift { height: 43px; line-height: 44px; color: #e58e68; }
.messages .flow { height: 43px; line-height: 46px; }
.messages .first { margin-top: 16px; }
.messages svg { display: inline-block; width: 14px; height: 20px; margin-left: 5px; vertical-align: 0; }
.messages .flow svg { margin-left: 0; }
.chat-tools { background: #fff; border-top: 1px solid #ddd; height: 40px; display: flex; justify-content: space-between; padding: 0 18px 2px 10px; }
.chat-tools svg { width: 19px; height: 19px; fill: none; stroke: #999; stroke-width: 1.8; }
.compose { background: #fff; display: flex; padding: 10px 7px 11px 2px; }
.compose textarea { flex: 1; min-width: 0; height: 80px; border: 1px solid #3a80c8; resize: none; background: #fff; }
.compose button { width: 49px; background: linear-gradient(100deg, #2f74f5, #4c9bff); color: #fff; font-size: 13px; }

/* frame */
.stage { flex: 1; min-width: 0; display: flex; flex-direction: column; padding-bottom: 2px; }
.behind { height: 8px; margin-left: 10px; display: flex; background: #b9b7b9; border-bottom: 1px solid #333; }
.behind .o1 { width: 107px; background: #c8652c; margin-right: 634px; }
.behind .b1 { width: 154px; background: #1468e8; }
.behind .o2 { width: 82px; background: #b9583a; margin-left: auto; margin-right: 200px; }
.share { flex: 1; display: flex; border: solid #1b6ddc; border-width: 5px 0 4px 5px; }
.aero { flex: 1; min-width: 0; display: flex; margin: 0 4px 0 7px; padding: 0 5px 0 6px; background: linear-gradient(#cfe4fa, #b4d4f8 24%, #6aa8f0 25%, #6aa8f0); }
.app { flex: 1; min-width: 0; display: flex; flex-direction: column; background: #585858; }
.titlebar { height: 26px; display: flex; align-items: center; position: relative; background: linear-gradient(#666, #4a4a4a); padding: 0 4px 0 150px; }
.titlebar h1 { flex: 1; text-align: center; font-size: 14px; }
.winbtns { display: flex; gap: 9px; background: #3e3e3e; border-radius: 2px; padding: 2px 4px; }
.watermark { position: absolute; left: -11px; top: 0; display: flex; gap: 5px; z-index: 2; color: #fff; }
.watermark div { display: flex; flex-direction: column; }
.watermark strong { font-size: 22px; line-height: 30px; font-weight: 500; padding-top: 1px; }
.watermark em { font-style: normal; font-weight: bold; font-size: 12px; line-height: 12px; }
.cols { flex: 1; display: flex; min-height: 0; }

/* left panel */
.panel { width: 405px; flex: none; display: flex; flex-direction: column; background: #6d6d6d; }
.panel-title { height: 21px; display: flex; align-items: center; background: linear-gradient(#ae824e, #8e6738); color: #e9d9bf; font-size: 11px; gap: 10px; padding-right: 12px; }
.panel-title span { flex: 1; padding-left: 134px; white-space: nowrap; }
.steps { display: flex; flex: none; margin: 6px 6px 10px 5px; height: 29px; background: #454545; border: 1px solid #2e2e2e; border-bottom: 3px solid #3a5f9e; box-shadow: 0 0 0 10px #868686; clip-path: inset(-6px -6px -10px -5px); }
.steps button { flex: 1; clip-path: polygon(0 0, 88% 0, 100% 50%, 88% 100%, 0 100%); margin-right: -6px; background: linear-gradient(90deg, #4a4a4a 85%, #777); padding-right: 6px; }
.steps svg { width: 22px; height: 21px; }
.steps .cur { background: linear-gradient(#eee, #bbb); margin: 0 0 -3px; clip-path: polygon(0 0, 88% 0, 100% 50%, 88% 100%, 0 100%, 12% 50%); }
.optabs { flex: none; background: #8a8a8a; height: 17px; padding-left: 9px; display: flex; }
.optabs button { width: 47px; background: linear-gradient(#e6e6e6, #9f9f9f); color: #333; font: bold 11px "DejaVu Sans", sans-serif; }
.pills { background: linear-gradient(#9a9a9a, #868686); height: 56px; padding: 5px 4px 7px 3px; display: flex; flex-wrap: wrap; align-content: space-between; column-gap: 3px; font-size: 11px; }
.pills button { width: 34px; height: 20px; border-radius: 10px; background: linear-gradient(#d6d6d6, #aaa); border: 1px solid #555; color: #222; }
.pills .on { background: #4a4a4a; color: #fff; font-weight: bold; }
.pills .w57 { width: 57px; } .pills .w47 { width: 47px; } .pills .w86 { width: 86px; } .pills .w23 { width: 23px; }
.pills .end { margin-left: auto; }
.evalrow { height: 37px; border-top: 1px solid #555; background: linear-gradient(#7a7a7a, #848484); display: flex; align-items: center; padding: 0 8px 0 9px; font-size: 11px; color: #ccc; }
.define { width: 49px; height: 19px; margin-left: 11px; border: 1px solid #2e2e2e; border-radius: 2px; background: linear-gradient(#707070, #555); }
.evalicons { margin-left: auto; display: flex; }
.evalicons button { width: 30px; height: 28px; border: 1px solid #777; }
.evalicons svg { width: 21px; height: 19px; }
.evalicons .c1 { width: 22px; background: #5e5e5e; }
.evalicons .c1 svg { width: 16px; height: 16px; }
.evalicons .c2 { width: 28px; background: #fff; }
.evalicons .c3 { width: 32px; background: #6a6a6a; }
.evalicons .c5 { background: #6a6a6a; }
.segwrap { height: 33px; background: linear-gradient(#636363, #505050); border-top: 1px solid #444; padding: 6px 39px 7px 42px; }
.seg { display: flex; height: 19px; border: 1px solid #2e2e2e; border-radius: 2px; font-size: 11px; }
.seg button { flex: 1; background: linear-gradient(#666, #4a4a4a); color: #fff; font-weight: 500; }
.seg .on { background: linear-gradient(#fff, #ddd); color: #222; }
.seg .off { color: #8a8a8a; background: #5c5c5c; }
.chart { background: linear-gradient(#fbfbfb, #c8d2de 80%, #b9c5d5); }
.chart svg { width: 100%; }
.ytick { font: 10px "DejaVu Sans", sans-serif; fill: #777; text-anchor: end; }
.xtick { font: 10px "DejaVu Sans", sans-serif; fill: #777; text-anchor: middle; }
.axis { font: 12px "Noto Sans CJK SC", sans-serif; fill: #111; text-anchor: middle; }
.areas { background: #c2cedd; padding-right: 15px; }
.areas table { width: 100%; border-collapse: collapse; table-layout: fixed; color: #222; font: 10px "Liberation Mono", monospace; }
.areas tr { height: 16px; }
.areas th { width: 41px; padding: 0 6px 0 0; text-align: right; font: 11px/14px "Noto Sans", sans-serif; color: #111; }
.areas td { padding: 0; text-align: center; white-space: nowrap; }
.k1 { background: #861cf8; } .k2 { background: #0069e0; } .k3 { background: #bdbdbd; } .k4 { background: #08b268; } .k5 { background: #fdf440; } .k6 { background: #ffae5a; } .k7 { background: #fd5b46; }
td.k1 { color: #fff; }
.picker { height: 24px; display: flex; background: #555; font-size: 11px; color: #ccc; border-bottom: 1px solid #555; }
.picker button { width: 33px; background: linear-gradient(#858585, #666); border-right: 1px solid #777; }
.picker svg { width: 24px; height: 20px; }
.picker .p1 { background: #d2d2d2; }
.picker .gap { margin-left: 4px; }
.picker .clear { flex: 1; padding-right: 34px; }
.picker .print { width: 54px; gap: 6px; }
.caret { width: 0; border: 3px solid transparent; border-top: 4px solid #ddd; border-bottom: 0; }
.fold { border-bottom: 1px solid #4e4e4e; border-top: 1px solid #808080; font-size: 11px; color: #ccc; }
.fold summary { list-style: none; display: flex; align-items: center; gap: 8px; height: 26px; padding-left: 11px; }
.fold summary::before { content: ""; border: 4px solid transparent; border-left: 6px solid #444; border-right: 0; filter: drop-shadow(0 0 1px #fff); }
.free { padding: 4px 12px; font-size: 11px; line-height: 16px; flex: 1; color: #d5d5d5; }
.panel-foot { height: 35px; border-top: 4px solid #2e2e2e; background: repeating-linear-gradient(135deg, #55554a 0 14px, #5c5b48 14px 28px); display: flex; align-items: center; gap: 8px; padding: 0 7px 2px 8px; font-size: 11px; }
.panel-foot button { width: 59px; height: 21px; gap: 7px; border: 1px solid #8a8a8a; border-radius: 3px; background: linear-gradient(#666, #444); color: #eee; }
.panel-foot .wide { width: 86px; gap: 4px; justify-content: flex-start; padding-left: 8px; }
.panel-foot .apply { margin-left: auto; color: #8c8c8c; }

/* work area */
.work { flex: 1; min-width: 0; display: flex; flex-direction: column; border-left: 2px solid #444; background: #6b6b6b; }
.menu { height: 21px; display: flex; justify-content: flex-end; background: #8a8a8a; padding-right: 325px; font-size: 11px; color: #eee; }
.menu button { width: 40px; }
.menu .on { width: 34px; background: #646464; color: #fff; font-weight: bold; border: solid #444; border-width: 0 1px; }
.ribbon { height: 92px; background: #5f5f5f; border-top: 1px solid #484848; border-bottom: 1px solid #484848; display: flex; gap: 5px; padding: 3px 1px 3px 4px; }
.grp { flex: none; height: 86px; border: 1px solid #444; border-radius: 3px; background: linear-gradient(#8d8d8d, #7c7c7c); display: flex; flex-direction: column; overflow: hidden; position: relative; }
.tools { display: grid; grid-template-rows: 33px 33px; padding-top: 2px; flex: 1; justify-content: start; align-items: center; justify-items: center; }
.tools svg { width: 23px; height: 23px; }
.tools button { width: 29px; height: 29px; border: 1px solid transparent; border-radius: 2px; }
.tools .dd { width: 38px; justify-content: space-between; padding-right: 1px; }
.tools .sel { background: linear-gradient(#566a8c, #65799a); border-color: #8098c4; }
.cap { height: 14px; background: #464646; font-size: 10px; line-height: 16px; color: #ccc; display: flex; justify-content: center; align-items: flex-start; position: relative; }
.cap svg { width: 11px; height: 11px; position: absolute; right: 2px; top: 1px; }
.g1 { width: 103px; } .g1 .tools { grid-template-columns: repeat(3, 33px); }
.g2 { width: 118px; } .g2 .tools { grid-template-columns: 34px 42px 40px; }
.g3 { width: 57px; } .g3 .tools { display: flex; justify-content: center; }
.g3 .cap { justify-content: flex-start; padding-left: 6px; }
.tools .big { width: 48px; height: 62px; flex-direction: column; gap: 6px; padding-top: 6px; }
.tools .big svg { width: 34px; height: 38px; }
.g4 { width: 129px; } .g4 .tools { grid-template-columns: 34px 50px 43px; }
.g5 { width: 137px; } .g5 .tools { grid-template-columns: repeat(4, 34px); }
.g6 { width: 102px; } .g6 .tools { grid-template-columns: repeat(3, 33px); }
.g7 { width: 72px; } .g7 .tools { grid-template-columns: repeat(2, 35px); }
.g7 .cap { justify-content: flex-start; padding-left: 8px; }
.rsep { width: 1px; background: #333; }
.g8 { flex: 1 1 314px; } .g8 .tools { grid-template-columns: repeat(7, 1fr); justify-content: stretch; padding-left: 2px; }
.g9 { width: 122px; } .g9 .tools { grid-template-columns: 34px 44px 42px; }
.more { position: absolute; right: 7px; top: 24px; }
.docs { height: 32px; display: flex; align-items: center; gap: 7px; padding: 0 6px 3px 5px; background: linear-gradient(#828282, #707070); font-size: 13px; color: #f2f2f2; }
.doc { height: 19px; display: flex; align-items: center; border: 1px solid #333; padding-left: 8px; gap: 4px; }
.doc span { padding-right: 6px; white-space: nowrap; }
.doc button { width: 17px; font-weight: bold; font-size: 10px; }
.doc .ok { fill: none; stroke: #c6f08a; stroke-width: 2; }
.blue { background: linear-gradient(#5474a8, #3a5686); } .brown { background: linear-gradient(#b98a52, #93693a); } .green { background: linear-gradient(#5a9464, #3c7248); }
.add { margin-left: auto; }
.docbar { height: 22px; display: flex; align-items: center; gap: 6px; padding: 0 10px 0 8px; background: linear-gradient(#b28450, #91683a); color: #f0e2c8; font-size: 11px; }
.docbar span { flex: 1; padding-bottom: 4px; }

/* viewport */
.viewport { flex: 1; position: relative; display: flex; flex-direction: column; justify-content: flex-end; background: linear-gradient(90deg, #f1f1f1 0 119px, #fff 121px calc(100% - 121px), #f1f1f1 calc(100% - 119px)); }
.model { position: absolute; inset: 0; width: 100%; height: 100%; }
.spin { position: absolute; top: 298px; writing-mode: vertical-rl; text-orientation: sideways; font-size: 22px; line-height: 24px; color: #fafafa; }
.spin.left { left: 46px; transform: rotate(180deg); }
.spin.right { right: 50px; }
.chip { height: 23px; width: 148px; border-radius: 3px; background: rgba(150, 150, 150, .7); gap: 9px; padding: 0 3px 0 2px; font: bold 12px "DejaVu Sans", "Noto Sans CJK SC", sans-serif; color: #fff; }
.chip span { flex: 1; text-align: left; }
.steps-chip { gap: 12px; padding-left: 4px; }
.chip.top { position: absolute; left: 7px; top: 10px; color: #666; }
.legend { position: absolute; right: 8px; top: 10px; width: 81px; border-radius: 3px; overflow: hidden; background: #adadad; }
.legend h2 { height: 47px; background: linear-gradient(#666, #444); font-size: 10px; line-height: 14px; padding: 3px 6px 6px; color: #fff; display: flex; flex-direction: column; justify-content: space-between; }
.legend h2 svg { align-self: flex-end; margin-top: 4px; margin-right: -2px; }
.legend ul { padding: 6px 3px 4px; display: flex; flex-direction: column; align-items: flex-end; }
.legend li { width: 12px; height: 13px; }
.axes { position: absolute; right: 11px; bottom: 40px; }
.timebar { position: relative; display: flex; align-items: center; gap: 11px; padding: 0 122px 13px 7px; }
.track { flex: 1; position: relative; display: flex; }
.ghost { position: absolute; left: 0; right: 0; bottom: 16px; display: flex; align-items: center; gap: 8px; color: #eaeaea; font: 10px "DejaVu Sans", sans-serif; }
.ghost span:first-child { flex: 1; }
input[type=range] { appearance: none; width: 100%; height: 10px; margin: 0; border-radius: 5px; background: #525252; border: 1px solid #333; }
input[type=range]::-webkit-slider-thumb { appearance: none; width: 6px; height: 6px; background: #eee; transform: rotate(45deg); margin-right: 4px; }
.gutter { width: 11px; display: flex; align-items: flex-start; justify-content: flex-end; background: #585858; padding-top: 390px; }
.gutter button { width: 9px; height: 146px; background: linear-gradient(#666, #909090, #666); border-radius: 9px 0 0 9px; }
```
FILE: chart.js
```js
// Draws the strain point cloud of the forming limit diagram.
(function () {
  var seed = 7;
  function rnd() { seed = (seed * 16807) % 2147483647; return seed / 2147483647; }
  function inside(x, y, p) {
    var r = false;
    for (var i = 0, j = p.length - 1; i < p.length; j = i++) {
      var a = p[i], b = p[j];
      if ((a[1] > y) !== (b[1] > y) && x < (b[0] - a[0]) * (y - a[1]) / (b[1] - a[1]) + a[0]) r = !r;
    }
    return r;
  }
  function scatter(poly, n, size) {
    var xs = poly.map(function (q) { return q[0]; }), ys = poly.map(function (q) { return q[1]; });
    var x0 = Math.min.apply(0, xs), x1 = Math.max.apply(0, xs), y0 = Math.min.apply(0, ys), y1 = Math.max.apply(0, ys);
    var d = '', k = 0;
    while (k < n) {
      var x = Math.round(x0 + rnd() * (x1 - x0)), y = Math.round(y0 + rnd() * (y1 - y0));
      if (!inside(x, y, poly)) continue;
      d += 'M' + (x - size / 2) + ' ' + (y - size / 2) + 'h' + size + 'v' + size + 'h-' + size + 'z';
      k++;
    }
    return d;
  }
  // Splits the edges into short steps so that the border looks sampled.
  function rough(p) {
    var r = [];
    for (var i = 0; i < p.length; i++) {
      var a = p[i], b = p[(i + 1) % p.length], n = Math.max(1, Math.round(Math.hypot(b[0] - a[0], b[1] - a[1]) / 9));
      for (var k = 0; k < n; k++) r.push([Math.round(a[0] + (b[0] - a[0]) * k / n + (rnd() - .5) * 8), Math.round(a[1] + (b[1] - a[1]) * k / n + (rnd() - .5) * 8)]);
    }
    return 'M' + r.map(function (q) { return q.join(' '); }).join('L') + 'z';
  }
  // Filled area with a black contour that follows the merged squares.
  function blob(fill, d) {
    return '<path d="' + d + '" fill="#000" stroke="#000" stroke-width="6" stroke-linejoin="round"/><path d="' + d + '" fill="' + fill + '"/>';
  }
  function flat(fill, d) { return '<path d="' + d + '" fill="' + fill + '"/>'; }
  function specks(p, n) { return '<path d="' + scatter(p, n, 5) + '" fill="#111"/>'; }

  var red = [[632, 362], [665, 378], [672, 430], [690, 480], [705, 560], [712, 620], [735, 640], [770, 700], [690, 750], [600, 660], [600, 600], [610, 520], [628, 440]];
  var purple = [[256, 812], [320, 800], [322, 765], [345, 738], [380, 748], [480, 870], [600, 975], [675, 1056], [590, 1022], [550, 985], [490, 950], [470, 890], [430, 850], [350, 845], [268, 838]];
  var blue = [[375, 745], [390, 708], [440, 735], [468, 762], [475, 715], [560, 840], [600, 930], [680, 1055], [600, 975], [480, 870]];
  var green = [[475, 712], [520, 682], [540, 740], [570, 770], [590, 745], [640, 790], [690, 820], [770, 785], [850, 870], [850, 885], [800, 890], [785, 920], [772, 970], [720, 1020], [690, 1055], [675, 1040], [600, 930], [560, 840]];
  var yellow = [[592, 675], [685, 762], [745, 750], [765, 792], [690, 818], [640, 790], [584, 745], [582, 708], [605, 708]];
  var orange = [[745, 765], [800, 780], [900, 790], [880, 845], [855, 872], [800, 825]];
  var shapes = [['#861cf8', rough(purple)], ['#0069e0', rough(blue)], ['#08b268', rough(green)], ['#fdf440', rough(yellow)], ['#ffae5a', rough(orange)]];

  var out = '';
  out += blob('#ffae5a', scatter([[700, 762], [850, 690], [955, 655], [957, 730], [920, 800], [880, 850], [860, 870], [800, 790]], 190, 10));
  out += blob('#861cf8', scatter([[415, 850], [480, 885], [490, 965], [450, 945]], 26, 12) + scatter(purple, 60, 14));
  shapes.forEach(function (s) { out += blob(s[0], s[1]); });
  shapes.forEach(function (s) { out += flat(s[0], s[1]); });
  out += blob('#fd5b46', rough(red) + scatter(red, 160, 14)
    + scatter([[580, 405], [605, 430], [640, 430], [600, 660], [580, 600]], 34, 10)
    + scatter([[690, 470], [740, 435], [760, 560], [710, 600]], 26, 11)
    + scatter([[750, 600], [850, 570], [910, 575], [955, 640], [850, 670], [730, 725], [730, 640]], 125, 10)
    + 'M625 330l15-4-2 14-12 2zM770 555h11v11h-11z');
  out += specks(red, 90) + specks(yellow, 20) + specks(purple, 24) + specks([[600, 780], [800, 810], [740, 880]], 10);
  document.getElementById('cloud').innerHTML = out;
})();
```
